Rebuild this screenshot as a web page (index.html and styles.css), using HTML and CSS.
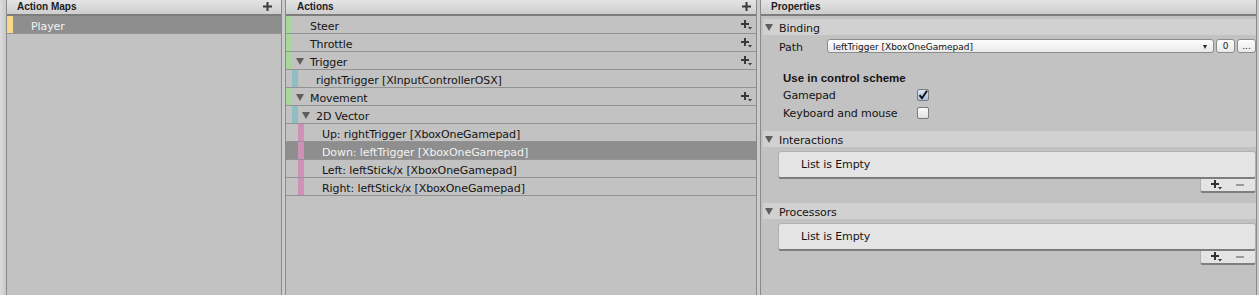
FILE: index.html
```html
<!DOCTYPE html>
<html lang="en">
<head>
    <meta charset="UTF-8">
    <title>Input Actions</title>
    <link rel="stylesheet" href="styles.css">
</head>
<body>
    <div class="window">
        <div class="edge"></div>

        <section class="pane maps">
            <header class="pane-head">
                <span>Action Maps</span>
                <svg class="plus" width="9" height="9" viewBox="0 0 9 9"><path d="M3.5 0h2v3.5H9v2H5.5V9h-2V5.5H0v-2h3.5z"/></svg>
            </header>
            <div class="row selected">
                <span class="strip map"></span>
                <span class="label">Player</span>
            </div>
        </section>

        <section class="pane actions">
            <header class="pane-head">
                <span>Actions</span>
                <svg class="plus" width="9" height="9" viewBox="0 0 9 9"><path d="M3.5 0h2v3.5H9v2H5.5V9h-2V5.5H0v-2h3.5z"/></svg>
            </header>
            <div class="row">
                <span class="strip action"></span>
                <span class="label">Steer</span>
                <svg class="add" width="11" height="10" viewBox="0 0 11 10"><path d="M3 0h2v3h3v2H5v3H3V5H0V3h3z"/><path d="M7 7h4l-2 2.5z"/></svg>
            </div>
            <div class="row">
                <span class="strip action"></span>
                <span class="label">Throttle</span>
                <svg class="add" width="11" height="10" viewBox="0 0 11 10"><path d="M3 0h2v3h3v2H5v3H3V5H0V3h3z"/><path d="M7 7h4l-2 2.5z"/></svg>
            </div>
            <div class="row">
                <span class="strip action"></span>
                <span class="fold"></span>
                <span class="label">Trigger</span>
                <svg class="add" width="11" height="10" viewBox="0 0 11 10"><path d="M3 0h2v3h3v2H5v3H3V5H0V3h3z"/><path d="M7 7h4l-2 2.5z"/></svg>
            </div>
            <div class="row">
                <span class="strip binding d1"></span>
                <span class="label">rightTrigger [XInputControllerOSX]</span>
            </div>
            <div class="row">
                <span class="strip action"></span>
                <span class="fold"></span>
                <span class="label">Movement</span>
                <svg class="add" width="11" height="10" viewBox="0 0 11 10"><path d="M3 0h2v3h3v2H5v3H3V5H0V3h3z"/><path d="M7 7h4l-2 2.5z"/></svg>
            </div>
            <div class="row">
                <span class="strip binding d1"></span>
                <span class="fold"></span>
                <span class="label">2D Vector</span>
            </div>
            <div class="row">
                <span class="strip part d2"></span>
                <span class="label">Up: rightTrigger [XboxOneGamepad]</span>
            </div>
            <div class="row selected">
                <span class="strip part d2"></span>
                <span class="label">Down: leftTrigger [XboxOneGamepad]</span>
            </div>
            <div class="row">
                <span class="strip part d2"></span>
                <span class="label">Left: leftStick/x [XboxOneGamepad]</span>
            </div>
            <div class="row">
                <span class="strip part d2"></span>
                <span class="label">Right: leftStick/x [XboxOneGamepad]</span>
            </div>
        </section>

        <section class="pane props">
            <header class="pane-head">
                <span>Properties</span>
            </header>

            <div class="foldout first">
                <span class="fold"></span>
                <span class="label">Binding</span>
            </div>
            <div class="path-row">
                <span class="path-label">Path</span>
                <div class="dropdown">
                    <span>leftTrigger [XboxOneGamepad]</span>
                    <span class="caret"></span>
                </div>
                <button class="mini">0</button>
                <button class="mini">...</button>
            </div>

            <div class="scheme-title">Use in control scheme</div>
            <div class="scheme-row">
                <span class="scheme-label">Gamepad</span>
                <span class="check on">
                    <svg width="10" height="10" viewBox="0 0 10 10"><path d="M1.5 5.2 4 8.2 9 0.8" fill="none" stroke="#111" stroke-width="2"/></svg>
                </span>
            </div>
            <div class="scheme-row">
                <span class="scheme-label">Keyboard and mouse</span>
                <span class="check"></span>
            </div>

            <div class="foldout">
                <span class="fold"></span>
                <span class="label">Interactions</span>
            </div>
            <div class="list">List is Empty</div>
            <div class="list-foot">
                <svg width="11" height="10" viewBox="0 0 11 10"><path d="M3 0h2v3h3v2H5v3H3V5H0V3h3z"/><path d="M7 7h4l-2 2.5z"/></svg>
                <span class="minus"></span>
            </div>

            <div class="foldout">
                <span class="fold"></span>
                <span class="label">Processors</span>
            </div>
            <div class="list">List is Empty</div>
            <div class="list-foot">
                <svg width="11" height="10" viewBox="0 0 11 10"><path d="M3 0h2v3h3v2H5v3H3V5H0V3h3z"/><path d="M7 7h4l-2 2.5z"/></svg>
                <span class="minus"></span>
            </div>
        </section>
    </div>
</body>
</html>
```

FILE: styles.css
```css
:root {
    --pane-bg: #c2c2c2;
    --line: #8a8a8a;
    --row-line: #939393;
    --selected: #8e8e8e;
    --text: #141414;
}
* {
    box-sizing: border-box;
}
html, body {
    margin: 0;
    padding: 0;
    height: 100%;
    overflow: hidden;
}
body {
    font-family: "DejaVu Sans", "Liberation Sans", sans-serif;
    font-size: 11px;
    letter-spacing: -0.1px;
    color: var(--text);
    background: #cbcbcb;
}
.window {
    display: flex;
    height: 295px;
}
.edge {
    width: 6px;
    background: linear-gradient(to right, #dcdcdc, #c8c8c8);
}
.pane {
    display: flex;
    flex-direction: column;
    background: var(--pane-bg);
    border-left: 1px solid var(--line);
    border-right: 1px solid var(--line);
}
.maps {
    width: 276px;
}
.actions {
    width: 472px;
    margin-left: 3px;
}
.props {
    width: 497px;
    margin-left: 3px;
}
.pane-head {
    display: flex;
    align-items: center;
    justify-content: space-between;
    height: 16px;
    padding: 0 6px 1px 10px;
    font-family: "Liberation Sans", sans-serif;
    font-size: 10px;
    font-weight: bold;
    letter-spacing: 0;
    color: #1c1c1c;
    background: linear-gradient(#e4e4e4, #cdcdcd);
    border-bottom: 2px solid #7d7d7d;
}
.actions .pane-head {
    padding-left: 11px;
    padding-right: 5px;
}
.maps .pane-head {
    padding-right: 9px;
}
.plus {
    fill: #3a3a3a;
}
.label {
    padding-top: 3px;
}

/* tree rows */
.row {
    display: flex;
    align-items: center;
    height: 18px;
    border-bottom: 1px solid var(--row-line);
}
.row.selected {
    background: var(--selected);
    color: #f2f2f2;
}
.strip {
    align-self: stretch;
    width: 6px;
    margin-right: 18px;
}
.strip.map { background: #f7da88; }
.strip.action { background: #a7d59a; }
.strip.binding { background: #8fbdc1; }
.strip.part { background: #cd92b4; }
.strip.d1 { margin-left: 6px; }
.strip.d2 { margin-left: 12px; }
.strip + .fold {
    margin-left: -14px;
    margin-right: 6px;
}
.fold {
    width: 0;
    height: 0;
    margin-top: 1px;
    border-left: 4px solid transparent;
    border-right: 4px solid transparent;
    border-top: 7px solid #5e5e5e;
}
.add {
    margin-left: auto;
    margin-right: 4px;
    fill: #3a3a3a;
}

/* properties */
.foldout {
    display: flex;
    align-items: center;
    height: 16px;
    margin: 10px 0 0 2px;
    background: #d1d1d1;
}
.foldout.first {
    margin-top: 3px;
}
.foldout .fold {
    margin: 1px 6px 0 2px;
}
.path-row {
    display: flex;
    align-items: center;
    height: 18px;
    margin-top: 2px;
    padding-left: 18px;
}
.path-label {
    width: 48px;
    padding-top: 3px;
}
.dropdown {
    flex: 1;
    display: flex;
    align-items: center;
    justify-content: space-between;
    height: 14px;
    padding: 1px 6px 0 5px;
    font-size: 9px;
    letter-spacing: 0;
    background: linear-gradient(#fdfdfd, #e9e9e9);
    border: 1px solid #8c8c8c;
    border-radius: 3px;
}
.caret {
    width: 0;
    height: 0;
    border-left: 2.5px solid transparent;
    border-right: 2.5px solid transparent;
    border-top: 4px solid #222;
}
.mini {
    width: 19px;
    height: 14px;
    margin-left: 2px;
    padding: 0;
    font-family: inherit;
    font-size: 9px;
    line-height: 11px;
    color: #222;
    background: linear-gradient(#fdfdfd, #e9e9e9);
    border: 1px solid #8c8c8c;
    border-radius: 3px;
}
.scheme-title {
    margin-top: 12px;
    padding-left: 22px;
    height: 18px;
    line-height: 23px;
    font-family: "Liberation Sans", sans-serif;
    font-size: 11.5px;
    font-weight: bold;
    letter-spacing: 0;
}
.scheme-row {
    display: flex;
    align-items: center;
    height: 18px;
    padding-left: 22px;
}
.scheme-label {
    width: 134px;
    padding-top: 2px;
}
.check {
    display: flex;
    align-items: center;
    justify-content: center;
    width: 12px;
    height: 12px;
    margin-top: 1px;
    background: linear-gradient(#fbfbfb, #e2e2e2);
    border: 1px solid #7b7b7b;
    border-radius: 2px;
}
.check.on {
    background: linear-gradient(#dce6f4, #a9bedc);
}
.list {
    height: 28px;
    margin: 4px 0 0 17px;
    padding-left: 22px;
    line-height: 25px;
    background: #e4e4e4;
    border: 1px solid #b0b0b0;
    border-bottom: 2px solid #7e7e7e;
    border-radius: 3px;
}
.list-foot {
    display: flex;
    align-items: center;
    justify-content: space-between;
    align-self: flex-end;
    width: 56px;
    height: 14px;
    padding: 0 11px 0 10px;
    background: #e4e4e4;
    border: 1px solid #b0b0b0;
    border-top: none;
    border-bottom: 2px solid #7e7e7e;
    border-radius: 0 0 3px 3px;
    fill: #333;
}
.minus {
    width: 8px;
    height: 2px;
    background: #9a9a9a;
}
```
